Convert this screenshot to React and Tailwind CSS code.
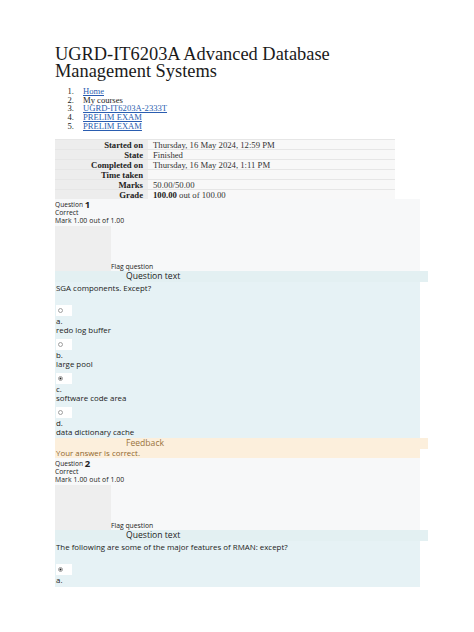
import React from "react";

const serif = "font-['Liberation_Serif',serif]";
const sans = "font-['Open_Sans',sans-serif]";

function Radio({ checked }) {
  return (
    <div className="h-[11px] w-[16px] bg-white flex items-center pl-[2px]">
      <svg width="5" height="5" viewBox="0 0 10 10">
        <circle cx="5" cy="5" r="4" fill="white" stroke="#8a8a8a" strokeWidth="1.6" />
        {checked && <circle cx="5" cy="5" r="2" fill="#222" />}
      </svg>
    </div>
  );
}

function Option({ letter, text, checked }) {
  return (
    <div className="flex flex-col">
      <Radio checked={checked} />
      <div className="h-[9px] leading-[9px] mt-[1px]">{letter}</div>
      <div className="h-[9px] leading-[9px]">{text}</div>
    </div>
  );
}

function QuestionInfo({ n }) {
  return (
    <div className="bg-[#f7f8f9] w-[365px] pt-[1px]">
      <div className="h-[9px] leading-[9px] text-[6.6px] text-[#222] flex items-end">
        <span>Question&nbsp;</span>
        <span className="font-bold text-[9.5px] leading-[9px]">{n}</span>
      </div>
      <div className="h-[8.5px] leading-[8.5px] text-[6.8px] text-[#222]">Correct</div>
      <div className="h-[8.5px] leading-[8.5px] text-[6.8px] text-[#222] tracking-[0.1px]">Mark 1.00 out of 1.00</div>
      <div className="flex items-end h-[45px]">
        <div className="w-[56px] h-[45px] bg-[#eeeeee]" />
        <div className="text-[6.8px] leading-[7px] text-[#222] mb-[1px]">Flag question</div>
      </div>
    </div>
  );
}

function Header({ children, bg, color }) {
  return (
    <div className={`h-[11px] w-[373px] ${bg} pl-[71px] text-[8.6px] leading-[11px] ${color}`}>
      {children}
    </div>
  );
}

const crumbs = [
  ["Home", true],
  ["My courses", false],
  ["UGRD-IT6203A-2333T", true],
  ["PRELIM EXAM", true],
  ["PRELIM EXAM", true],
];

export default function App() {
  return (
    <div className="min-h-[632px] bg-white pl-[55px] pt-[46px] text-[#1a1a1a]">
      <h1 className={`${serif} text-[18.4px] leading-[17px] text-[#1a1a1a]`}>
        UGRD-IT6203A Advanced Database
        <br />
        Management Systems
      </h1>

      <ol className={`${serif} mt-[7px] text-[8.6px] leading-[8.7px]`}>
        {crumbs.map(([t, link], i) => (
          <li key={i} className="flex">
            <span className="w-[19px] text-right text-[#1a1a1a]">{i + 1}.</span>
            <span className="ml-[9px]">
              {link ? <a className="text-[#2a5db0] underline">{t}</a> : t}
            </span>
          </li>
        ))}
      </ol>

      <div className={`${serif} mt-[8px] w-[340px] text-[8.7px] leading-[10px]`}>
        {[
          ["Started on", "Thursday, 16 May 2024, 12:59 PM"],
          ["State", "Finished"],
          ["Completed on", "Thursday, 16 May 2024, 1:11 PM"],
          ["Time taken", ""],
          ["Marks", "50.00/50.00"],
          ["Grade", null],
        ].map(([k, v]) => (
          <div key={k} className="flex h-[10px] border-t border-[#e6e6e6]">
            <div className="w-[93px] bg-[#ededed] text-right pr-[5px] font-bold text-[#222]">{k}</div>
            <div className="flex-1 bg-[#f8f8f8] pl-[5px] text-[#333]">
              {v === null ? (
                <span>
                  <b className="text-[#222]">100.00</b> out of 100.00
                </span>
              ) : (
                v
              )}
            </div>
          </div>
        ))}
      </div>

      <div className={`${sans}`}>
        <QuestionInfo n="1" />
        <Header bg="bg-[#e3f0f2]" color="text-[#222]">Question text</Header>
        <div className="w-[365px] bg-[#e6f2f5] pt-[2px] pb-[1px] text-[7.9px] text-[#222]">
          <div className="h-[9px] leading-[9px] pl-[1px]">SGA components. Except?</div>
          <div className="mt-[12px] flex flex-col gap-[4px] pl-[1px]">
            <Option letter="a." text="redo log buffer" />
            <Option letter="b." text="large pool" />
            <Option letter="c." text="software code area" checked />
            <Option letter="d." text="data dictionary cache" />
          </div>
        </div>
        <Header bg="bg-[#fcefdc]" color="text-[#9a7440]">Feedback</Header>
        <div className="w-[365px] bg-[#fcefdc] h-[9px] leading-[9px] pl-[1px] text-[7.9px] text-[#8e662e]">
          Your answer is correct.
        </div>

        <QuestionInfo n="2" />
        <Header bg="bg-[#e3f0f2]" color="text-[#222]">Question text</Header>
        <div className="w-[365px] bg-[#e6f2f5] pt-[2px] pb-[2px] text-[7.9px] text-[#222]">
          <div className="h-[9px] leading-[9px] pl-[1px]">
            The following are some of the major features of RMAN: except?
          </div>
          <div className="mt-[12px] flex flex-col pl-[1px]">
            <Radio checked />
            <div className="h-[9px] leading-[9px] mt-[1px]">a.</div>
          </div>
        </div>
      </div>
    </div>
  );
}
